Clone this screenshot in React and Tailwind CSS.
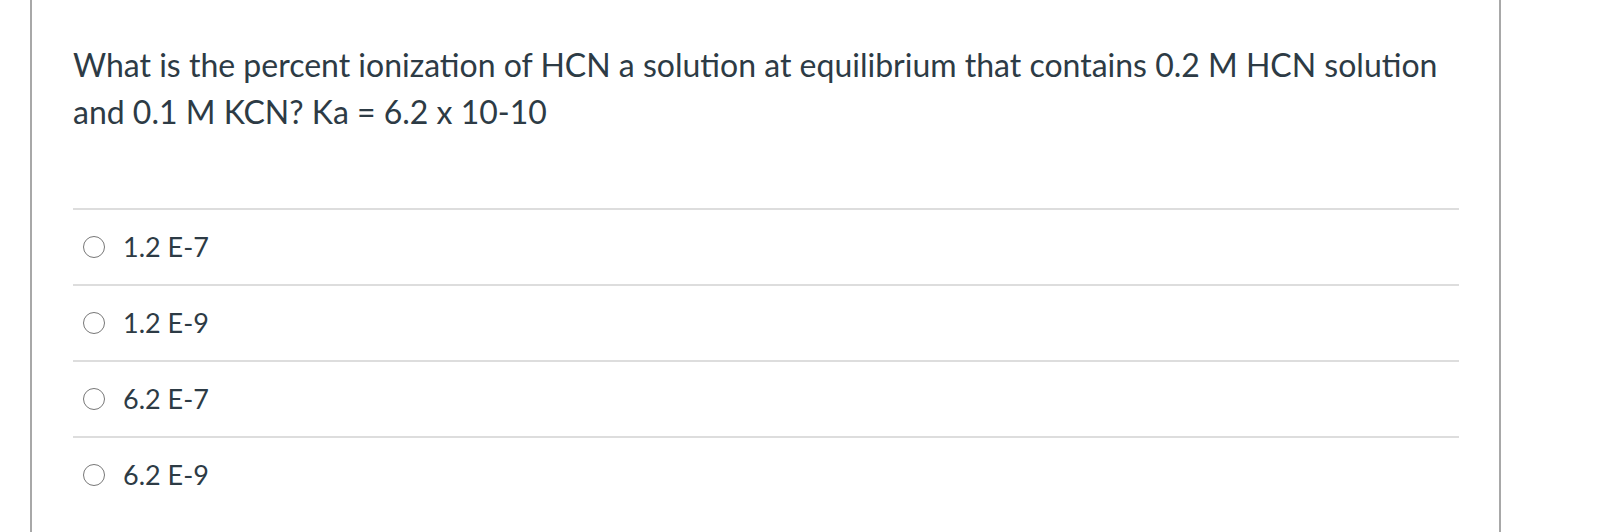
export default function App() {
  const options = ["1.2 E-7", "1.2 E-9", "6.2 E-7", "6.2 E-9"];
  return (
    <div className="w-[1606px] h-[532px] bg-white overflow-hidden" style={{ fontFamily: "Lato, 'Noto Sans', sans-serif" }}>
      <div className="ml-[30px] w-[1471px] h-full border-x-2 border-[#a8a8a8] px-[41px] pt-[41px]">
        <p className="text-[32px] leading-[47px] text-[#2d3b45]">
          What is the percent ionization of HCN a solution at equilibrium that contains 0.2 M HCN solution and 0.1 M KCN? Ka = 6.2 x 10-10
        </p>
        <div className="mt-[73px] mr-[-1px]">
          {options.map((o) => (
            <div key={o} className="h-[76px] border-t-2 border-[#dddddd] flex items-center pl-[10px]">
              <span className="w-[22px] h-[22px] rounded-full border-[1.5px] border-[#777777] shrink-0"></span>
              <span className="ml-[18px] text-[27px] text-[#2d3b45]">{o}</span>
            </div>
          ))}
        </div>
      </div>
    </div>
  );
}
